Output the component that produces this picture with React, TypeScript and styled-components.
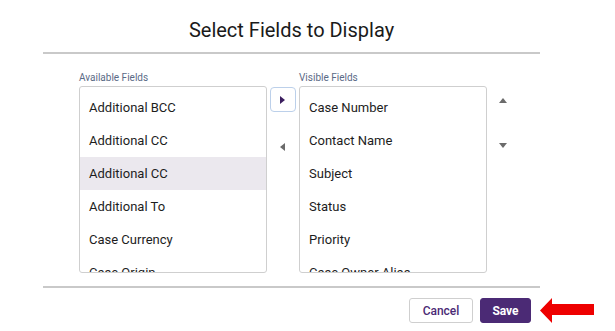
import React from 'react';
import styled, { createGlobalStyle } from 'styled-components';

const GlobalStyle = createGlobalStyle`
    body {
        margin: 0;
        background: #fff;
        font-family: Roboto, "Liberation Sans", Arial, sans-serif;
    }
`;

const available = ['Additional BCC', 'Additional CC', 'Additional CC', 'Additional To', 'Case Currency', 'Case Origin'];
const visible = ['Case Number', 'Contact Name', 'Subject', 'Status', 'Priority', 'Case Owner Alias'];

type Dir = 'up' | 'down' | 'left' | 'right';

function Triangle({ dir, color, size = 8 }: { dir: Dir; color: string; size?: number }) {
    const pts: Record<Dir, string> = {
        up: '0,6 4,1 8,6',
        down: '0,1 4,6 8,1',
        left: '6,0 1,4 6,8',
        right: '1,0 6,4 1,8',
    };
    return (
        <svg width={size} height={size} viewBox="0 0 8 8">
            <polygon points={pts[dir]} fill={color} />
        </svg>
    );
}

export default function App(): JSX.Element {
    return (
        <Page>
            <GlobalStyle />
            <Dialog>
                <Header>
                    <Title>Select Fields to Display</Title>
                </Header>

                <Body>
                    <Column>
                        <Label>Available Fields</Label>
                        <ListBox>
                            {available.map((name, i) => (
                                <Option key={i} selected={i === 2}>
                                    {name}
                                </Option>
                            ))}
                        </ListBox>
                    </Column>

                    <MoveColumn>
                        <MoveButton>
                            <Triangle dir="right" color="#3b1e5f" />
                        </MoveButton>
                        <PlainArrow>
                            <Triangle dir="left" color="#6b6b6b" />
                        </PlainArrow>
                    </MoveColumn>

                    <Column>
                        <Label>Visible Fields</Label>
                        <ListBox>
                            {visible.map((name, i) => (
                                <Option key={i}>{name}</Option>
                            ))}
                        </ListBox>
                    </Column>

                    <OrderColumn>
                        <Triangle dir="up" color="#6b6b6b" />
                        <Triangle dir="down" color="#6b6b6b" />
                    </OrderColumn>
                </Body>

                <Footer>
                    <Button>Cancel</Button>
                    <Button primary>Save</Button>
                    <Pointer width="54" height="25" viewBox="0 0 54 25">
                        <polygon points="0,12.5 12,0 12,6 54,6 54,17 12,17 12,25" fill="#ee0000" />
                    </Pointer>
                </Footer>
            </Dialog>
        </Page>
    );
}

const Page = styled.div`
    width: 615px;
    height: 331px;
    padding-left: 43px;
    box-sizing: border-box;
    overflow: hidden;
`;

const Dialog = styled.div`
    width: 497px;
`;

const Header = styled.div`
    padding: 18px 0 10px;
    border-bottom: 2px solid #c9c9c9;
    text-align: center;
`;

const Title = styled.h2`
    margin: 0;
    font-size: 20px;
    line-height: 24px;
    font-weight: 400;
    color: #1a1a1a;
`;

const Body = styled.div`
    display: flex;
    align-items: flex-start;
    padding: 18px 0 13px 36px;
    border-bottom: 2px solid #c9c9c9;
`;

const Column = styled.div`
    display: flex;
    flex-direction: column;
    width: 188px;
`;

const Label = styled.div`
    font-size: 10px;
    line-height: 12px;
    color: #5a6a86;
    margin-bottom: 2px;
`;

const ListBox = styled.div`
    height: 187px;
    box-sizing: border-box;
    border: 1px solid #cfcfcf;
    border-radius: 3px;
    padding-top: 4px;
    overflow: hidden;
`;

interface OptionProps {
    selected?: boolean;
}

const Option = styled.div<OptionProps>`
    height: 33px;
    line-height: 33px;
    padding-left: 9px;
    font-size: 13px;
    color: #1d1d1d;
    white-space: nowrap;
    background: ${props => (props.selected ? '#ebe8ee' : 'transparent')};
`;

const MoveColumn = styled.div`
    display: flex;
    flex-direction: column;
    align-items: center;
    width: 26px;
    margin: 15px 3px 0;
`;

const MoveButton = styled.div`
    display: flex;
    align-items: center;
    justify-content: center;
    width: 26px;
    height: 25px;
    box-sizing: border-box;
    border: 1px solid #bcd0ea;
    border-radius: 4px;
    background: #fff;
`;

const PlainArrow = styled.div`
    display: flex;
    margin-top: 31px;
`;

const OrderColumn = styled.div`
    display: flex;
    flex-direction: column;
    align-items: center;
    gap: 37px;
    width: 22px;
    margin: 25px 0 0 5px;
`;

const Footer = styled.div`
    position: relative;
    display: flex;
    justify-content: flex-end;
    gap: 7px;
    padding: 10px 9px 0 0;
`;

interface ButtonProps {
    primary?: boolean;
}

const Button = styled.button<ButtonProps>`
    width: ${props => (props.primary ? '51px' : '64px')};
    height: 25px;
    padding: 0;
    font-family: Roboto, "Liberation Sans", Arial, sans-serif;
    font-size: 12px;
    font-weight: ${props => (props.primary ? 700 : 500)};
    border-radius: 3px;
    border: 1px solid ${props => (props.primary ? '#4b2a75' : '#cfcfcf')};
    background: ${props => (props.primary ? '#4b2a75' : '#fff')};
    color: ${props => (props.primary ? '#fff' : '#4b2a75')};
`;

const Pointer = styled.svg`
    position: absolute;
    left: 497px;
    top: 10px;
`;
